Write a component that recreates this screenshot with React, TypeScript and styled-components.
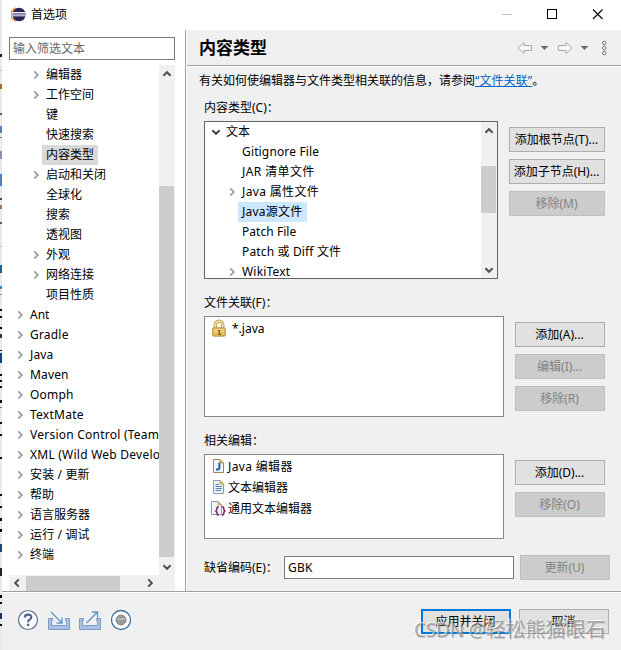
import React from "react";
import styled, { createGlobalStyle, css } from "styled-components";

const GlobalStyle = createGlobalStyle`
  * { box-sizing: border-box; }
  html, body { margin: 0; padding: 0; overflow: hidden; }
  body {
    font-family: "Noto Sans", "Noto Sans CJK SC", sans-serif;
    font-size: 12px;
    color: #000;
    background: #fff;
  }
`;

const Screen = styled.div`
  position: relative;
  display: flex;
  width: 621px;
  height: 650px;
  overflow: hidden;
`;
const EdgeStrip = styled.svg`
  flex: none;
  width: 2px;
  height: 650px;
`;
const Dialog = styled.div`
  flex: 1;
  min-width: 0;
  display: flex;
  flex-direction: column;
  background: #f0f0f0;
`;
const TitleBar = styled.header`
  height: 30px;
  flex: none;
  display: flex;
  align-items: center;
  padding: 0 0 2px 9px;
  background: #fff;
  white-space: nowrap;
`;
const TitleText = styled.span`
  flex: 1;
  margin-left: 5px;
  padding-top: 2px;
  line-height: 26px;
`;
const WindowControls = styled.svg`
  width: 119px;
  height: 28px;
`;
const Body = styled.div`
  display: flex;
  height: 561px;
  flex: none;
`;
const Sidebar = styled.aside`
  width: 184px;
  flex: none;
  background: #fff;
  border-right: 1px solid #a0a0a0;
  padding: 7px 0 0 7px;
`;
const FilterInput = styled.div`
  width: 166px;
  height: 23px;
  border: 1px solid #7a7a7a;
  padding-left: 3px;
  line-height: 21px;
  color: #666;
`;
const Explorer = styled.div`
  display: grid;
  grid-template-columns: 150px 16px;
  grid-template-rows: 510px 16px;
  margin-top: 5px;
`;
const TreeView = styled.div`
  overflow: hidden;
`;
const TreeRow = styled.div<{ $indent: number }>`
  height: 20px;
  display: flex;
  align-items: center;
  padding-left: ${(p) => p.$indent}px;
  white-space: nowrap;
`;
const ExpanderSlot = styled.span`
  width: 15px;
  height: 20px;
  flex: none;
  display: flex;
  align-items: center;
  justify-content: flex-end;
`;
const RowText = styled.span<{ $bg?: string; $spacing?: number }>`
  height: 20px;
  line-height: 19px;
  padding: 0 4px 0 4px;
  background: ${(p) => p.$bg ?? "transparent"};
  letter-spacing: ${(p) => p.$spacing ?? 0}px;
`;
const VScroll = styled.div`
  background: #f0f0f0;
  display: flex;
  flex-direction: column;
  align-items: center;
  width: 16px;
`;
const VThumb = styled.div<{ $top: number; $h: number }>`
  width: 15px;
  align-self: flex-start;
  height: ${(p) => p.$h}px;
  margin-top: ${(p) => p.$top}px;
  background: #cdcdcd;
`;
const ArrowSlot = styled.div<{ $end?: boolean }>`
  width: 16px;
  height: 17px;
  flex: none;
  display: flex;
  align-items: center;
  justify-content: center;
  ${(p) => p.$end && css`margin-top: auto;`}
`;
const HScroll = styled.div`
  grid-column: 1 / 3;
  background: #f0f0f0;
  display: flex;
  align-items: center;
`;
const HThumb = styled.div`
  width: 94px;
  height: 15px;
  background: #cdcdcd;
  margin: 0 22px 0 1px;
`;
const Page = styled.main`
  flex: 1;
  min-width: 0;
  border-left: 1px solid #fff;
`;
const PageHeader = styled.div`
  height: 36px;
  display: flex;
  align-items: center;
  padding-left: 12px;
  border-bottom: 1px solid #a0a0a0;
`;
const PageTitle = styled.h1`
  flex: 1;
  margin: 0;
  padding-top: 1px;
  font-size: 17px;
  line-height: 34px;
  font-weight: 700;
`;
const Navigation = styled.svg`
  width: 107px;
  height: 35px;
`;
const PageContent = styled.div`
  border-top: 1px solid #fff;
  padding: 4px 0 0 12px;
`;
const Hint = styled.p`
  margin: 0;
  height: 20px;
  line-height: 20px;
  white-space: nowrap;
`;
const Link = styled.a`
  color: #0066cc;
  text-decoration: underline;
  letter-spacing: 0.1px;
`;
const Section = styled.section`
  display: flex;
  align-items: flex-start;
  padding-left: 5px;
`;
const Caption = styled.div<{ $top: number; $h: number }>`
  margin: ${(p) => p.$top}px 0 0 5px;
  height: ${(p) => p.$h}px;
  line-height: 20px;
  white-space: nowrap;
`;
const ListBox = styled.div<{ $w: number; $h: number; $tone?: string }>`
  width: ${(p) => p.$w}px;
  height: ${(p) => p.$h}px;
  flex: none;
  border: 1px solid ${(p) => p.$tone ?? "#828790"};
  background: #fff;
  display: flex;
  overflow: hidden;
`;
const ListItems = styled.div`
  flex: 1;
  min-width: 0;
`;
const ListItem = styled.div`
  height: 21px;
  display: flex;
  align-items: center;
  padding-left: 6px;
  white-space: nowrap;
`;
const ItemText = styled.span<{ $gap?: number; $spacing?: number }>`
  line-height: 19px;
  padding-top: 2px;
  margin-left: ${(p) => p.$gap ?? 0}px;
  letter-spacing: ${(p) => p.$spacing ?? 0}px;
`;
const ButtonColumn = styled.div`
  display: flex;
  flex-direction: column;
  gap: 7px;
  padding: 6px 0 0 11px;
`;
const Button = styled.button<{ $w?: number; $primary?: boolean }>`
  width: ${(p) => p.$w ?? 90}px;
  height: 25px;
  padding: 0 1px 0 0;
  font: inherit;
  line-height: 21px;
  color: #000;
  white-space: nowrap;
  background: #e1e1e1;
  border: 1px solid #adadad;
  ${(p) => p.$primary && css`
    border: 2px solid #0078d7;
    line-height: 19px;
  `}
  &:disabled {
    color: #838383;
    background: #cccccc;
    border-color: #bfbfbf;
  }
`;
const EncodingRow = styled.div`
  display: flex;
  align-items: center;
  margin-top: 16px;
  padding-left: 5px;
`;
const EncodingLabel = styled.label`
  width: 80px;
  line-height: 22px;
  white-space: nowrap;
`;
const EncodingField = styled.div`
  width: 230px;
  height: 23px;
  border: 1px solid #7a7a7a;
  background: #fff;
  padding-left: 3px;
  line-height: 21px;
  letter-spacing: 0.2px;
  margin-right: 6px;
`;
const Footer = styled.footer`
  flex: 1;
  border-top: 1px solid #a0a0a0;
  box-shadow: inset 0 1px #fff;
  display: flex;
  align-items: flex-start;
  padding: 17px 12px 0 14px;
`;
const FooterIcons = styled.svg`
  width: 120px;
  height: 26px;
  margin-right: auto;
`;
const FooterButtons = styled.div`
  display: flex;
  gap: 8px;
`;
const Watermark = styled.div`
  position: absolute;
  left: 414px;
  top: 615px;
  font-size: 20px;
  line-height: 30px;
  white-space: nowrap;
  color: rgba(125, 125, 125, 0.6);
  text-shadow: -1px -1px 0 rgba(255, 255, 255, 0.65), 1px 1px 0 rgba(110, 110, 110, 0.3);
`;
const WatermarkLatin = styled.span`
  font-size: 19px;
  letter-spacing: -0.2px;
`;

type Direction = "right" | "down" | "left" | "up";
const rotation: Record<Direction, number> = { right: 0, down: 90, left: 180, up: 270 };

function Chevron({ dir = "right", color = "#a0a0a0" }: { dir?: Direction; color?: string }) {
  return (
    <svg width="12" height="12" viewBox="0 0 12 12">
      <path
        d="M4.2 2.4 L7.8 6 L4.2 9.6"
        fill="none"
        stroke={color}
        strokeWidth="2"
        transform={`rotate(${rotation[dir]} 6 6)`}
      />
    </svg>
  );
}

interface Node {
  text: string;
  level?: number;
  expandable?: boolean;
  open?: boolean;
  selected?: boolean;
  spacing?: number;
}

const preferences: Node[] = [
  { text: "编辑器", level: 1, expandable: true },
  { text: "工作空间", level: 1, expandable: true },
  { text: "键", level: 1 },
  { text: "快速搜索", level: 1 },
  { text: "内容类型", level: 1, selected: true },
  { text: "启动和关闭", level: 1, expandable: true },
  { text: "全球化", level: 1 },
  { text: "搜索", level: 1 },
  { text: "透视图", level: 1 },
  { text: "外观", level: 1, expandable: true },
  { text: "网络连接", level: 1, expandable: true },
  { text: "项目性质", level: 1 },
  { text: "Ant", expandable: true },
  { text: "Gradle", expandable: true, spacing: 0.2 },
  { text: "Java", expandable: true, spacing: 0.1 },
  { text: "Maven", expandable: true, spacing: 0.15 },
  { text: "Oomph", expandable: true, spacing: 0.2 },
  { text: "TextMate", expandable: true, spacing: 0.25 },
  { text: "Version Control (Team)", expandable: true, spacing: 0.24 },
  { text: "XML (Wild Web Developer)", expandable: true, spacing: 0.24 },
  { text: "安装 / 更新", expandable: true, spacing: 0.15 },
  { text: "帮助", expandable: true },
  { text: "语言服务器", expandable: true },
  { text: "运行 / 调试", expandable: true, spacing: 0.15 },
  { text: "终端", expandable: true },
];

const contentTypes: Node[] = [
  { text: "文本", expandable: true, open: true },
  { text: "Gitignore File", level: 1, spacing: 0.15 },
  { text: "JAR 清单文件", level: 1, spacing: 0.4 },
  { text: "Java 属性文件", level: 1, expandable: true, spacing: 0.35 },
  { text: "Java源文件", level: 1, selected: true, spacing: 0.25 },
  { text: "Patch File", level: 1, spacing: 0.05 },
  { text: "Patch 或 Diff 文件", level: 1, spacing: 0.15 },
  { text: "WikiText", level: 1, expandable: true, spacing: 0.2 },
];

function Tree({ nodes, indent, highlight }: { nodes: Node[]; indent: number; highlight: string }) {
  return (
    <TreeView>
      {nodes.map((n) => (
        <TreeRow key={n.text} $indent={indent + (n.level ?? 0) * 16}>
          <ExpanderSlot>
            {n.expandable && <Chevron dir={n.open ? "down" : "right"} color={n.open ? "#404040" : "#a6a6a6"} />}
          </ExpanderSlot>
          <RowText $bg={n.selected ? highlight : undefined} $spacing={n.spacing}>{n.text}</RowText>
        </TreeRow>
      ))}
    </TreeView>
  );
}

function VerticalScrollbar({ top, height }: { top: number; height: number }) {
  return (
    <VScroll>
      <ArrowSlot><Chevron dir="up" color="#505050" /></ArrowSlot>
      <VThumb $top={top} $h={height} />
      <ArrowSlot $end><Chevron dir="down" color="#505050" /></ArrowSlot>
    </VScroll>
  );
}

function EclipseLogo() {
  return (
    <svg width="15" height="15" viewBox="0 0 15 15">
      <path d="M5 .8 A7 7 0 0 0 5 14.2" fill="none" stroke="#f7941e" strokeWidth="1.4" />
      <circle cx="8" cy="7.5" r="6.8" fill="#2c2255" />
      <path d="M1 5.6H15M1 8.8H15" stroke="#fff" strokeWidth="1" />
      <path d="M1 7.2H15" stroke="#9b94bd" strokeWidth="2" />
    </svg>
  );
}

function LockIcon() {
  return (
    <svg width="16" height="18" viewBox="0 0 16 18">
      <path d="M4.2 9V6a3.8 3.8 0 0 1 7.6 0V9" fill="none" stroke="#b99743" strokeWidth="3.2" />
      <path d="M4.2 9V6a3.8 3.8 0 0 1 7.6 0V9" fill="none" stroke="#f8e7ac" strokeWidth="1.5" />
      <rect x="1.8" y="8.9" width="12.4" height="8.2" rx=".7" fill="#e3bd55" stroke="#b08a35" />
      <path d="M2.5 10.4h11M2.5 12.4h11" stroke="#f6de93" />
      <path d="M7 11.6h1.4v3.6M7 15.2h3" fill="none" stroke="#78561b" strokeWidth="1.1" />
    </svg>
  );
}

function Sheet({ kind }: { kind: "java" | "text" | "generic" }) {
  const x = kind === "generic" ? 0 : 2;
  const w = kind === "java" ? 10 : 10;
  return (
    <svg width="17" height="18" viewBox="0 0 17 18">
      <path
        d={`M${x + 0.5} 2.5H${x + 7}L${x + w + 0.5} 6V15.5H${x + 0.5}Z`}
        fill="#eef4fc"
        stroke={kind === "java" ? "#a78644" : "#8b9cb4"}
      />
      <path d={`M${x + 7} 2.5V6H${x + w + 0.5}Z`} fill="#d9bd70" stroke="#c6a75b" />
      {kind === "java" && <path d="M8.4 5.5V10.5Q8.4 12.6 6.3 12.6H5" fill="none" stroke="#256298" strokeWidth="2" />}
      {kind === "text" && <path d="M4.5 6.5H8M4.5 8.5H11M4.5 10.5H11M4.5 12.5H10" stroke="#5f83b5" />}
      {kind === "generic" && (
        <g fill="none" stroke="#8b1f70" strokeWidth="1.6">
          <path d="M7.8 7.8Q6 7.7 6 9.3Q6.1 11.7 4.3 12Q6.1 12.3 6 14.5Q6 16.1 7.8 16" />
          <path d="M10.8 7.8Q12.7 7.7 12.7 9.3Q12.6 11.7 14.4 12Q12.6 12.3 12.7 14.5Q12.7 16.1 10.8 16" />
        </g>
      )}
    </svg>
  );
}

const edgeMarks: [number, number, number, string][] = [
  [0, 54, 3, "#202020"], [0, 70, 1, "#c0c0c0"], [0, 84, 5, "#b56a1c"],
  [0, 113, 2, "#606060"], [0, 126, 7, "#5f80b7"], [0, 137, 1, "#777"],
  [0, 151, 8, "#8a91a8"], [0, 174, 12, "#4c83bd"], [0, 198, 2, "#444"],
  [0, 205, 4, "#a07862"], [0, 222, 2, "#62506a"], [0, 246, 1, "#bbb"],
  [0, 265, 8, "#16629e"], [0, 286, 3, "#3d84be"], [0, 294, 1, "#999"],
  [0, 309, 2, "#000"], [0, 316, 2, "#000"], [0, 327, 2, "#000"],
  [0, 334, 4, "#333"], [0, 350, 1, "#111"], [0, 353, 10, "#0c418d"],
  [0, 374, 2, "#000"], [0, 380, 2, "#000"], [0, 386, 2, "#000"],
  [0, 400, 3, "#111"], [0, 407, 1, "#9b6c48"], [0, 422, 2, "#000"],
  [0, 434, 2, "#000"], [0, 457, 2, "#000"], [0, 494, 2, "#000"],
  [0, 506, 2, "#000"], [0, 518, 3, "#000"], [0, 529, 3, "#000"],
  [0, 544, 8, "#14477b"], [0, 568, 8, "#222"], [0, 595, 3, "#000"],
  [0, 602, 2, "#000"], [0, 613, 6, "#18375b"], [0, 624, 2, "#000"],
];

export default function App() {
  return (
    <Screen>
      <GlobalStyle />
      <EdgeStrip viewBox="0 0 2 650">
        <rect width="2" height="650" fill="#e9e9e9" />
        {edgeMarks.map(([x, y, h, c]) => <rect key={y} x={x} y={y} width="2" height={h} fill={c} />)}
      </EdgeStrip>
      <Dialog>
        <TitleBar>
          <EclipseLogo />
          <TitleText>首选项</TitleText>
          <WindowControls viewBox="0 0 119 28">
            <path d="M0 14.5H10" stroke="#c4c4c4" />
            <rect x="45.5" y="9.5" width="9" height="9" fill="none" stroke="#000" />
            <path d="M91 9.5L100.5 19M100.5 9.5L91 19" stroke="#000" strokeWidth="1.1" />
          </WindowControls>
        </TitleBar>
        <Body>
          <Sidebar>
            <FilterInput>输入筛选文本</FilterInput>
            <Explorer>
              <Tree nodes={preferences} indent={2} highlight="#d9d9d9" />
              <VerticalScrollbar top={104} height={371} />
              <HScroll>
                <ArrowSlot><Chevron dir="left" color="#505050" /></ArrowSlot>
                <HThumb />
                <ArrowSlot><Chevron color="#505050" /></ArrowSlot>
              </HScroll>
            </Explorer>
          </Sidebar>
          <Page>
            <PageHeader>
              <PageTitle>内容类型</PageTitle>
              <Navigation viewBox="0 0 107 35">
                <g fill="#f8f8f8" stroke="#a8a8a8" strokeLinejoin="round">
                  <path d="M4 18L10 12.5V15.5H17.5V20.5H10V23.5Z" />
                  <path d="M58 18L52 12.5V15.5H44.5V20.5H52V23.5Z" />
                </g>
                <path d="M26.5 16H34.5L30.5 20ZM66.5 16H74.5L70.5 20Z" fill="#6b6b6b" />
                <g fill="none" stroke="#777">
                  <circle cx="90.3" cy="13" r="1.8" />
                  <circle cx="90.3" cy="18" r="1.8" />
                  <circle cx="90.3" cy="23" r="1.8" />
                </g>
              </Navigation>
            </PageHeader>
            <PageContent>
              <Hint>有关如何使编辑器与文件类型相关联的信息，请参阅<Link>“文件关联”</Link>。</Hint>
              <Caption $top={7} $h={23}>内容类型(C)：</Caption>
              <Section>
                <ListBox $w={294} $h={158} $tone="#646464">
                  <ListItems><Tree nodes={contentTypes} indent={2} highlight="#cce8ff" /></ListItems>
                  <VerticalScrollbar top={27} height={47} />
                </ListBox>
                <ButtonColumn>
                  <Button $w={96}>添加根节点(T)...</Button>
                  <Button $w={96}>添加子节点(H)...</Button>
                  <Button $w={96} disabled>移除(M)</Button>
                </ButtonColumn>
              </Section>
              <Caption $top={14} $h={23}>文件关联(F)：</Caption>
              <Section>
                <ListBox $w={300} $h={101}>
                  <ListItems>
                    <ListItem><LockIcon /><ItemText $gap={5}>*.java</ItemText></ListItem>
                  </ListItems>
                </ListBox>
                <ButtonColumn>
                  <Button>添加(A)...</Button>
                  <Button disabled>编辑(I)...</Button>
                  <Button disabled>移除(R)</Button>
                </ButtonColumn>
              </Section>
              <Caption $top={14} $h={23}>相关编辑：</Caption>
              <Section>
                <ListBox $w={300} $h={85}>
                  <ListItems>
                    <ListItem><Sheet kind="java" /><ItemText $spacing={0.35}>Java 编辑器</ItemText></ListItem>
                    <ListItem><Sheet kind="text" /><ItemText>文本编辑器</ItemText></ListItem>
                    <ListItem><Sheet kind="generic" /><ItemText>通用文本编辑器</ItemText></ListItem>
                  </ListItems>
                </ListBox>
                <ButtonColumn>
                  <Button>添加(D)...</Button>
                  <Button disabled>移除(O)</Button>
                </ButtonColumn>
              </Section>
              <EncodingRow>
                <EncodingLabel>缺省编码(E)：</EncodingLabel>
                <EncodingField>GBK</EncodingField>
                <Button disabled>更新(U)</Button>
              </EncodingRow>
            </PageContent>
          </Page>
        </Body>
        <Footer>
          <FooterIcons viewBox="0 0 120 26">
            <circle cx="12" cy="11" r="9.5" fill="#f8f9fb" stroke="#5e6e91" strokeWidth="1.2" />
            <path d="M8.8 8.5Q8.8 5.6 12.1 5.6Q15.4 5.6 15.3 8.3Q15.2 10 13.4 10.9Q12.1 11.6 12.1 13.3M12.1 14.8V17" fill="none" stroke="#4c5f88" strokeWidth="2.1" />
            <g fill="#a9c0e0" stroke="#7f9dc9">
              <path d="M32.5 9.5H36.5V11.5H35.5V16.5H50.5V11.5H49.5V9.5H53.5V20.5H32.5Z" />
              <path d="M63.5 9.5H67.5V11.5H66.5V16.5H81.5V11.5H80.5V9.5H84.5V20.5H63.5Z" />
            </g>
            <g fill="none" stroke="#5d9ac5" strokeWidth="1.4">
              <path d="M35 3L45.5 13.5M46 8.5V14H40.5" />
              <path d="M70.5 14L81.5 3M76 3H81.5V8.5" />
            </g>
            <circle cx="105" cy="11" r="9.5" fill="#fff" stroke="#3c719f" strokeWidth="1.3" />
            <circle cx="105" cy="11" r="5" fill="#999" stroke="#858585" />
            <path d="M101 10H109" stroke="#b8b8b8" strokeWidth="2" />
          </FooterIcons>
          <FooterButtons>
            <Button $primary>应用并关闭</Button>
            <Button>取消</Button>
          </FooterButtons>
        </Footer>
      </Dialog>
      <Watermark><WatermarkLatin>CSDN @</WatermarkLatin>轻松熊猫眼石</Watermark>
    </Screen>
  );
}
